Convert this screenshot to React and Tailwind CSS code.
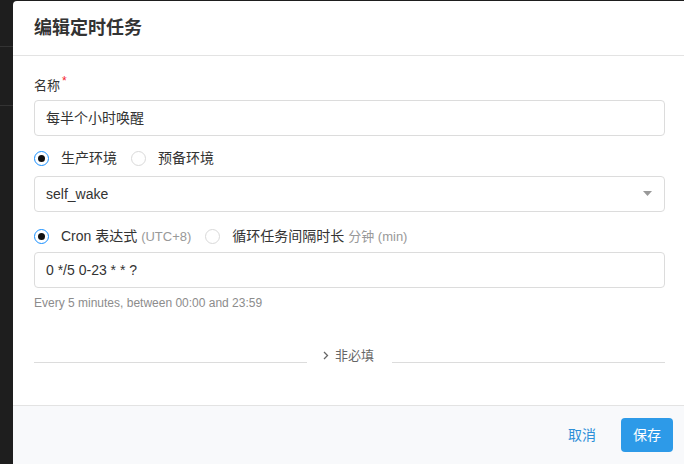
const font = { fontFamily: '"Liberation Sans", "Noto Sans CJK SC", sans-serif' };

function Radio({ checked, children }) {
  return (
    <label className="flex items-center gap-[12px] cursor-pointer">
      <span
        className={
          checked
            ? "w-[15px] h-[15px] rounded-full border border-[#1890ff] flex items-center justify-center bg-white"
            : "w-[15px] h-[15px] rounded-full border border-[#d9d9d9] bg-white"
        }
      >
        {checked && <span className="w-[7px] h-[7px] rounded-full bg-[#111]" />}
      </span>
      <span>{children}</span>
    </label>
  );
}

export default function App() {
  return (
    <div className="w-[684px] h-[464px] bg-[#1e1e1e] flex overflow-hidden text-[14px] text-[#333]" style={font}>
      {/* Left backdrop strip */}
      <div className="w-[13px] flex flex-col">
        <div className="h-[47px] border-b border-[#333]" />
        <div className="h-[59px] border-b border-[#333]" />
      </div>

      {/* Modal */}
      <div className="flex-1 mt-px bg-white rounded-tl-[4px] flex flex-col">
        <div className="h-[55px] border-b border-[#e3e3e3] flex items-center px-[21px]">
          <h2 className="text-[18px] font-bold text-[#333]">编辑定时任务</h2>
        </div>

        <div className="flex-1 pl-[21px] pr-[19px] pt-[20px]">
          <div className="flex items-start h-[24px] text-[13px]">
            <span>名称</span>
            <span className="text-[#f5222d] text-[12px] leading-none ml-[2px] mt-[-1px]">*</span>
          </div>
          <div className="h-[36px] border border-[#dcdcdc] rounded-[4px] flex items-center px-[11px]">
            每半个小时唤醒
          </div>

          <div className="flex items-center gap-[14px] h-[40px] pt-[5px]">
            <Radio checked>生产环境</Radio>
            <Radio>预备环境</Radio>
          </div>
          <div className="h-[36px] border border-[#dcdcdc] rounded-[4px] flex items-center justify-between px-[11px]">
            <span>self_wake</span>
            <svg width="9" height="6" viewBox="0 0 9 6" className="mr-[1px]">
              <path d="M0 0 L9 0 L4.5 5 Z" fill="#999" />
            </svg>
          </div>

          <div className="flex items-center gap-[14px] h-[40px] pt-[8px]">
            <Radio checked>
              Cron 表达式 <span className="text-[#999] text-[13px]">(UTC+8)</span>
            </Radio>
            <Radio>
              循环任务间隔时长 <span className="text-[#999] text-[13px]">分钟 (min)</span>
            </Radio>
          </div>
          <div className="h-[36px] border border-[#dcdcdc] rounded-[4px] flex items-center px-[11px]">
            0 */5 0-23 * * ?
          </div>
          <div className="text-[12px] text-[#8c8c8c] mt-[6px]">Every 5 minutes, between 00:00 and 23:59</div>

          <div className="flex items-center mt-[34px]">
            <div className="flex-1 border-t border-[#dcdcdc] mt-[14px]" />
            <div className="pl-[16px] pr-[18px] flex items-center gap-[6px] text-[#666] text-[13px]">
              <svg width="6" height="9" viewBox="0 0 6 9">
                <path d="M1 1 L4.5 4.5 L1 8" fill="none" stroke="#666" strokeWidth="1.3" />
              </svg>
              <span>非必填</span>
            </div>
            <div className="flex-1 border-t border-[#dcdcdc] mt-[14px]" />
          </div>
        </div>

        <div className="h-[59px] border-t border-[#e3e3e3] bg-[#f8f9fb] flex items-center justify-end pr-[11px] gap-[25px]">
          <button className="text-[#2d8fd8] text-[14px]">取消</button>
          <button className="h-[34px] w-[52px] rounded-[4px] bg-[#2d9ae8] text-white text-[14px]">保存</button>
        </div>
      </div>
    </div>
  );
}
